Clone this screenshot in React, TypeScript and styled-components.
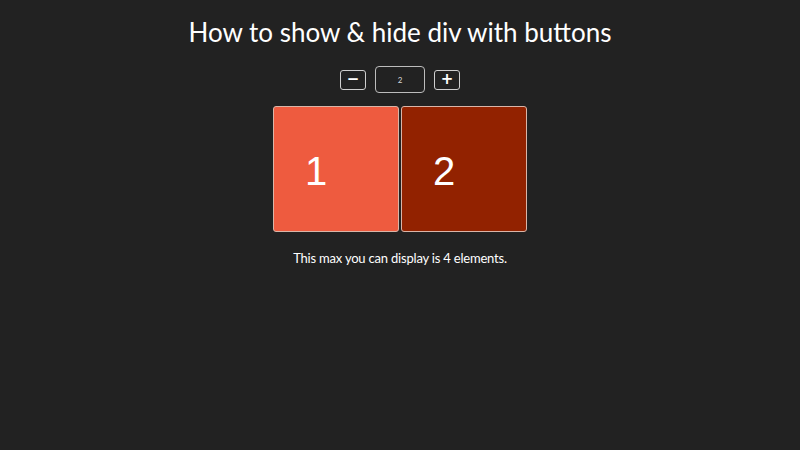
import styled, { createGlobalStyle } from "styled-components";

const GlobalStyle = createGlobalStyle`
  html, body {
    margin: 0;
    background: #222222;
  }
`;

const items = [
  { label: "1", color: "#ee5b3f" },
  { label: "2", color: "#922200" },
];

function App() {
  return (
    <>
      <GlobalStyle />
      <Page>
        <Title>How to show &amp; hide div with buttons</Title>
        <Controls>
          <StepButton>−</StepButton>
          <CountInput>2</CountInput>
          <StepButton>+</StepButton>
        </Controls>
        <Boxes>
          {items.map((item) => (
            <Box key={item.label} $color={item.color}>
              {item.label}
            </Box>
          ))}
        </Boxes>
        <Note>This max you can display is 4 elements.</Note>
      </Page>
    </>
  );
}

export default App;

const Page = styled.div`
  display: flex;
  flex-direction: column;
  align-items: center;
  padding-top: 15px;
  font-family: "Lato", "Open Sans", sans-serif;
  color: #ffffff;
`;

const Title = styled.h1`
  margin: 0;
  font-size: 26px;
  font-weight: 400;
  line-height: 34px;
  letter-spacing: 0;
`;

const Controls = styled.div`
  display: flex;
  align-items: center;
  gap: 9px;
  margin-top: 17px;
`;

const StepButton = styled.div`
  width: 24px;
  height: 18px;
  border: 1px solid #cfcfcf;
  border-radius: 3px;
  display: flex;
  align-items: center;
  justify-content: center;
  font-family: "DejaVu Sans", sans-serif;
  font-size: 15px;
  font-weight: 700;
  line-height: 1;
`;

const CountInput = styled.div`
  width: 48px;
  height: 25px;
  border: 1px solid #bdbdbd;
  border-radius: 4px;
  display: flex;
  align-items: center;
  justify-content: center;
  font-size: 8px;
  color: #d8d8d8;
`;

const Boxes = styled.div`
  display: flex;
  gap: 2px;
  margin-top: 13px;
`;

const Box = styled.div<{ $color: string }>`
  box-sizing: border-box;
  width: 126px;
  height: 126px;
  background: ${(p) => p.$color};
  border: 1px solid #d9b5a8;
  border-radius: 3px;
  display: flex;
  align-items: center;
  padding: 4px 0 0 31px;
  font-family: "Liberation Sans", Arial, sans-serif;
  font-size: 40px;
  color: #ffffff;
`;

const Note = styled.p`
  margin: 17px 0 0;
  font-size: 13px;
  line-height: 18px;
  letter-spacing: -0.2px;
`;
